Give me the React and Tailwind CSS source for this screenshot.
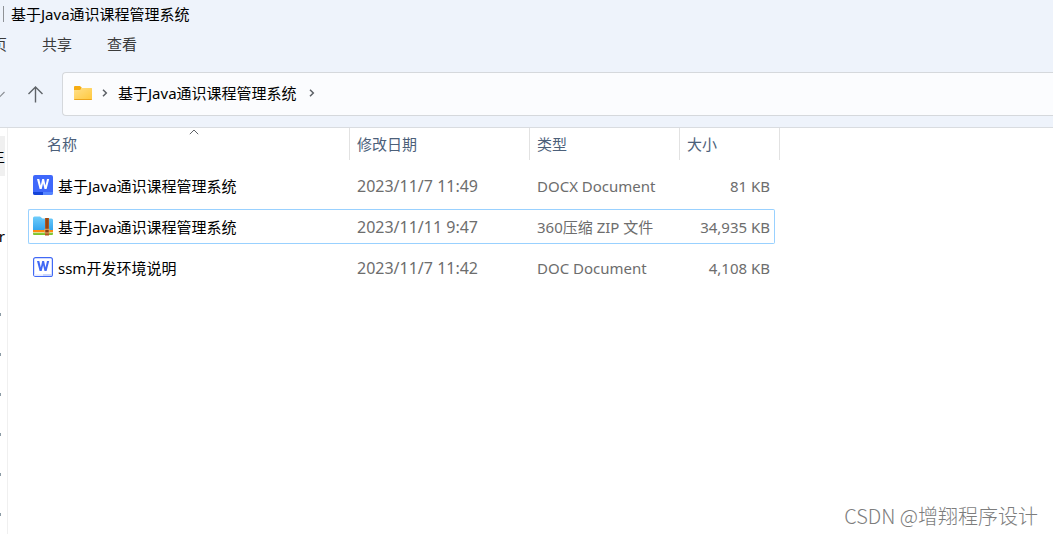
import React from "react";

function WordIcon({ solid }) {
  return (
    <svg width="20" height="20" viewBox="0 0 20 20" className="shrink-0" aria-hidden="true">
      {solid ? (
        <>
          <rect width="20" height="20" rx="2" fill="#3f68fb" />
          <path d="M0 17h10v3H2a2 2 0 0 1-2-2z" fill="#1443d8" />
          <path d="M10 17h10v1a2 2 0 0 1-2 2h-8z" fill="#5585ff" />
        </>
      ) : (
        <>
          <rect x=".6" y=".6" width="18.8" height="18.8" rx="2" fill="#fff" stroke="#4169f5" strokeWidth="1.2" />
          <path d="M1.2 17h8.8v1.8H1.2z" fill="#eef2ff" />
          <path d="M10 17h8.800v1.800H10z" fill="#c9d5fb" />
        </>
      )}
      <path
        d="M4 4h2.300l1.500 6.400L9.200 4h1.900l1.400 6.400L14 4h2.200l-2.600 10h-2.100L10.100 8.200 8.700 14H6.600z"
        fill={solid ? "#fff" : "#4169f5"}
      />
    </svg>
  );
}

function ZipIcon() {
  return (
    <svg width="20" height="20" viewBox="0 0 20 20" className="shrink-0" aria-hidden="true">
      <defs>
        <linearGradient id="zipBlue" x1="0" y1="0" x2="0" y2="1">
          <stop offset="0" stopColor="#6fcdfb" />
          <stop offset="1" stopColor="#35a5ee" />
        </linearGradient>
      </defs>
      <path d="M0 16h20v2a1 1 0 0 1-1 1H1a1 1 0 0 1-1-1z" fill="#7cc52c" />
      <path d="M0 13h20v3.500H0z" fill="#ff8a12" />
      <path d="M0 16.300h20v.8H0z" fill="#e9f5c8" />
      <path d="M0 2A1.500 1.500 0 0 1 1.500.5H7L9.500 2.500H18.500A1.500 1.500 0 0 1 20 4V14H0z" fill="url(#zipBlue)" />
      <path d="M12 2h4v17.500h-4z" fill="#b0561c" />
      <path d="M13.500 2h1v11h-1z" fill="#7c370f" />
      <path d="M11.800 13.300h4.400v3.600h-4.400z" fill="#8a3d10" stroke="#f2c27c" strokeWidth=".8" />
    </svg>
  );
}

function FolderIcon() {
  return (
    <svg width="18" height="14" viewBox="0 0 18 14" className="shrink-0" aria-hidden="true">
      <defs>
        <linearGradient id="folder" x1="0" y1="0" x2="1" y2="1">
          <stop offset="0" stopColor="#ffe08a" />
          <stop offset="1" stopColor="#ffc83c" />
        </linearGradient>
      </defs>
      <path d="M0 1a1 1 0 0 1 1-1h5l1.500 1.500V5H0z" fill="#f6ad13" />
      <path d="M0 4h6l2-2h9.500a.5.5 0 0 1 .5.5V13a1 1 0 0 1-1 1H1a1 1 0 0 1-1-1z" fill="url(#folder)" />
      <path d="M0 13h18a1 1 0 0 1-1 1H1a1 1 0 0 1-1-1z" fill="#eda51c" />
    </svg>
  );
}

function Chevron() {
  return (
    <svg width="6" height="8" viewBox="0 0 6 8" className="shrink-0" aria-hidden="true">
      <path d="M1 .8 4.300 4 1 7.200" fill="none" stroke="#5c6066" strokeWidth="1.5" />
    </svg>
  );
}

const files = [
  { icon: <WordIcon solid />, name: "基于Java通识课程管理系统", date: "2023/11/7 11:49", type: "DOCX Document", size: "81 KB" },
  { icon: <ZipIcon />, name: "基于Java通识课程管理系统", date: "2023/11/11 9:47", type: "360压缩 ZIP 文件", size: "34,935 KB", selected: true },
  { icon: <WordIcon />, name: "ssm开发环境说明", date: "2023/11/7 11:42", type: "DOC Document", size: "4,108 KB" },
];

function FileRow({ file }) {
  const edge = file.selected ? "border-[#99d1ff]" : "border-transparent";
  const cell = `flex h-[35px] items-center border-y ${edge}`;
  return (
    <tr className="h-[41px] text-[#6d6d6d]">
      <td className="p-0">
        <div className={`${cell} gap-[5px] rounded-l-[2px] border-l pl-1 text-black`}>
          <span className="pb-0.5">{file.icon}</span>
          <a href="#file" className="whitespace-nowrap">{file.name}</a>
        </div>
      </td>
      <td className="p-0"><div className={`${cell} pl-[7px] text-base leading-5`}>{file.date}</div></td>
      <td className="p-0"><div className={`${cell} pl-[7px]`}>{file.type}</div></td>
      <td className="p-0 pr-[5px]">
        <div className={`${cell} justify-end rounded-r-[2px] border-r pr-1`}>{file.size}</div>
      </td>
    </tr>
  );
}

function HeaderCell({ children, first }) {
  return (
    <th scope="col" className="relative h-[37px] p-0 align-top font-normal">
      <div className={`flex h-8 items-center border-r border-[#e2e2e2] ${first ? "pl-[19px]" : "pl-[7px]"}`}>{children}</div>
      {first && (
        <svg width="10" height="6" viewBox="0 0 10 6" className="absolute top-px left-1/2" aria-hidden="true">
          <path d="M.8 5.200 5 1 9.200 5.200" fill="none" stroke="#5f6368" />
        </svg>
      )}
    </th>
  );
}

export default function App() {
  return (
    <div className="relative flex min-h-screen flex-col overflow-hidden bg-white font-['Noto_Sans','Noto_Sans_CJK_SC',sans-serif] text-[15px] leading-5">
      <header className="border-b border-[#d9dce0] bg-[#eef3fb]">
        <div className="flex h-7 items-center gap-[7px] pl-[3px]">
          <span className="h-4 w-px bg-[#8f9296]" />
          <h1>基于Java通识课程管理系统</h1>
        </div>
        <nav className="flex h-8 items-center gap-[35px] text-[#3b3b3b]">
          <button className="flex w-[7px] justify-end overflow-hidden whitespace-nowrap">主页</button>
          <button>共享</button>
          <button>查看</button>
        </nav>
        <div className="flex items-center pt-3 pb-[11px]">
          <button aria-label="最近位置" className="flex w-[5px] justify-end overflow-hidden">
            <svg width="10" height="7" viewBox="0 0 10 7" className="shrink-0" aria-hidden="true">
              <path d="M.5 1 5 5.500 9.500 1" fill="none" stroke="#8b8f94" strokeWidth="1.2" />
            </svg>
          </button>
          <button aria-label="向上" className="ml-[22px] mr-[18px]">
            <svg width="17" height="17" viewBox="0 0 17 17" aria-hidden="true">
              <path d="M8.500 16.500V1.200M1.500 8 8.500 1l7 7" fill="none" stroke="#5f6368" strokeWidth="1.4" />
            </svg>
          </button>
          <div className="flex h-11 flex-1 items-center rounded-l-[4px] border border-r-0 border-[#d5d8dc] bg-[#fbfcfe] pb-0.5 pl-[11px]">
            <FolderIcon />
            <span className="mx-[10px]"><Chevron /></span>
            <a href="#folder">基于Java通识课程管理系统</a>
            <span className="ml-3"><Chevron /></span>
          </div>
        </div>
      </header>

      <div className="flex flex-1">
        <aside className="flex w-2 shrink-0 flex-col overflow-hidden border-r border-[#f0f0f0] pt-2">
          <div className="flex h-10 w-[5px] items-center justify-end overflow-hidden bg-[#f0f0f0]">
            <span>主</span>
          </div>
          <div className="mt-10 flex h-10 w-[5px] items-center justify-end">r</div>
          <ul className="mt-[38px]">
            {[1, 2, 3, 4, 5, 6].map((n) => (
              <li key={n} className="flex h-10 items-center">
                <span className="h-[3px] w-px bg-[#8b9ba5]" />
              </li>
            ))}
          </ul>
        </aside>
        <main className="pl-5">
          <table className="w-[752px] table-fixed border-collapse text-left">
            <colgroup>
              <col className="w-[322px]" />
              <col className="w-[180px]" />
              <col className="w-[150px]" />
              <col className="w-[100px]" />
            </colgroup>
            <thead className="text-[#4c607a]">
              <tr>
                <HeaderCell first>名称</HeaderCell>
                <HeaderCell>修改日期</HeaderCell>
                <HeaderCell>类型</HeaderCell>
                <HeaderCell>大小</HeaderCell>
              </tr>
            </thead>
            <tbody>
              {files.map((file, i) => (
                <FileRow key={i} file={file} />
              ))}
            </tbody>
          </table>
        </main>
      </div>
      <p className="absolute right-[15px] bottom-1 font-['Noto_Sans_CJK_SC',sans-serif] text-xl leading-7 font-light text-[#7d7d7d]">CSDN @增翔程序设计</p>
    </div>
  );
}
